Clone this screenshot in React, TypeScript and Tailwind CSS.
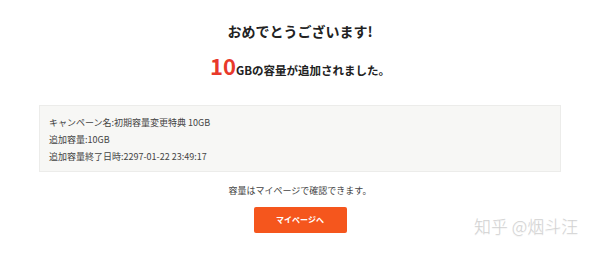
export default function App() {
  return (
    <div
      className="relative h-[253px] w-[600px] overflow-hidden bg-white text-[#333]"
      style={{ fontFamily: '"Noto Sans CJK JP", "Noto Sans", sans-serif' }}
    >
      <div className="flex flex-col items-center pt-[21px]">
        <h1 className="text-[14px] font-bold leading-[20px] text-[#222]">おめでとうございます!</h1>
        <p className="mt-[10px] flex items-baseline font-bold text-[#222]">
          <span className="text-[22px] leading-[28px] text-[#e8392b]">10</span>
          <span className="text-[11.5px]">GBの容量が追加されました。</span>
        </p>
      </div>

      <div className="mx-[39px] mt-[26px] border border-[#ececea] bg-[#f7f7f5] px-[9px] pt-[8px] pb-[6px] text-[9px] leading-[17px] text-[#444]">
        <p>キャンペーン名:初期容量変更特典 10GB</p>
        <p>追加容量:10GB</p>
        <p>追加容量終了日時:2297-01-22 23:49:17</p>
      </div>

      <div className="flex flex-col items-center">
        <p className="mt-[12px] text-[9px] leading-[14px] text-[#444]">容量はマイページで確認できます。</p>
        <button
          type="button"
          className="mt-[9px] h-[26px] w-[93px] rounded-[2px] bg-[#f5561d] text-[8px] font-bold text-white"
        >
          マイページへ
        </button>
      </div>

      <span className="absolute left-[474px] top-[215px] text-[17px] font-light leading-[22px] text-[#d2d2d2] [text-shadow:0_1px_1px_rgba(0,0,0,0.06)]">
        知乎 @烟斗汪
      </span>
    </div>
  );
}
